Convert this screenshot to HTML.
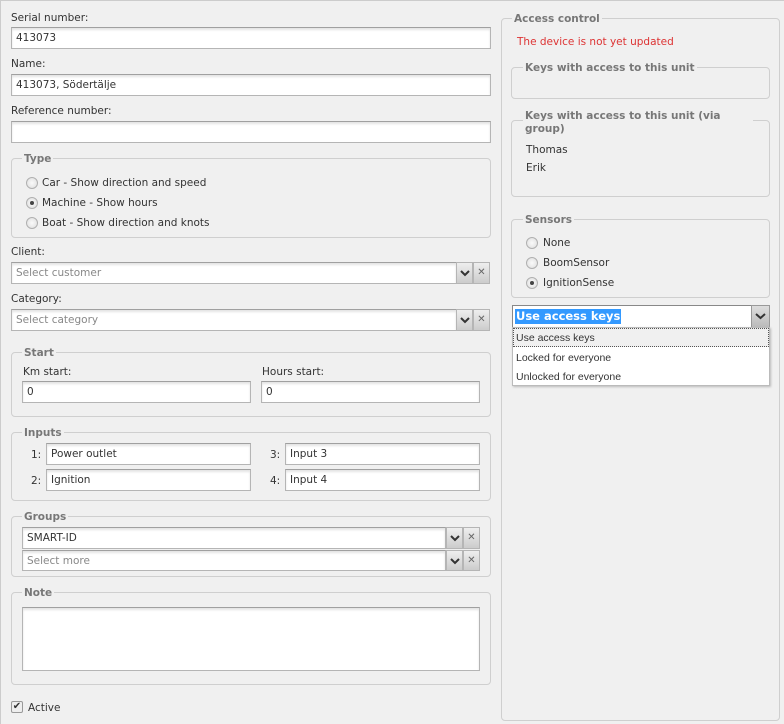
<!DOCTYPE html>
<html><head><meta charset="utf-8"><style>
*{box-sizing:border-box;margin:0;padding:0}
body{width:784px;height:724px;background:#f0f0f0;font-family:"DejaVu Sans",Verdana,sans-serif;font-size:10.5px;color:#333;position:relative;overflow:hidden}
.a{position:absolute}
.lbl{position:absolute;line-height:12px;padding-top:1px}
.inp{position:absolute;background:#fff;border:1px solid #b5b5b5;border-top-color:#a0a0a0;height:22px;line-height:21px;padding-left:4px;box-shadow:inset 0 2px 2px #e4e4e4}
.fs{position:absolute;border:1px solid #cfcfcf;border-radius:4px}
.lg{position:absolute;background:#f0f0f0;font-weight:bold;color:#777;padding:1px 2px 0;line-height:12px}
.rad{position:absolute;width:12px;height:12px;border-radius:50%;border:1px solid #b0b0b0;background:radial-gradient(#fafafa,#ddd);margin-top:1px}
.rad.on::after{content:"";position:absolute;left:3px;top:3px;width:4px;height:4px;border-radius:50%;background:#444}
.btn{position:absolute;width:17px;height:22px;border:1px solid #b5b5b5;background:linear-gradient(#eee,#ccc);color:#666;text-align:center;line-height:20px;font-size:10px}
.btn svg{position:absolute;left:3px;top:7px}
.ph{color:#888}
</style></head><body>
<div class="a" style="left:0;top:0;width:784px;height:1px;background:#ccc"></div>
<div class="a" style="left:0;top:0;width:1px;height:724px;background:#ccc"></div>

<div class="lbl" style="left:11px;top:11px">Serial number:</div>
<div class="inp" style="left:11px;top:27px;width:480px">413073</div>
<div class="lbl" style="left:11px;top:57px">Name:</div>
<div class="inp" style="left:11px;top:74px;width:480px">413073, Södertälje</div>
<div class="lbl" style="left:11px;top:104px">Reference number:</div>
<div class="inp" style="left:11px;top:121px;width:480px"></div>

<div class="fs" style="left:11px;top:158px;width:480px;height:80px"></div>
<div class="lg" style="left:22px;top:152px">Type</div>
<div class="rad" style="left:26px;top:176px"></div><div class="lbl" style="left:42px;top:176px">Car - Show direction and speed</div>
<div class="rad on" style="left:26px;top:196px"></div><div class="lbl" style="left:42px;top:196px">Machine - Show hours</div>
<div class="rad" style="left:26px;top:216px"></div><div class="lbl" style="left:42px;top:216px">Boat - Show direction and knots</div>

<div class="lbl" style="left:11px;top:245px">Client:</div>
<div class="inp ph" style="left:11px;top:262px;width:446px">Select customer</div>
<div class="btn" style="left:456px;top:262px"><svg width="10" height="7"><path d="M1 1L5 5L9 1" stroke="#333" stroke-width="2" fill="none"/></svg></div><div class="btn" style="left:473px;top:262px">✕</div>
<div class="lbl" style="left:11px;top:292px">Category:</div>
<div class="inp ph" style="left:11px;top:309px;width:446px">Select category</div>
<div class="btn" style="left:456px;top:309px"><svg width="10" height="7"><path d="M1 1L5 5L9 1" stroke="#333" stroke-width="2" fill="none"/></svg></div><div class="btn" style="left:473px;top:309px">✕</div>

<div class="fs" style="left:11px;top:352px;width:480px;height:65px"></div>
<div class="lg" style="left:22px;top:346px">Start</div>
<div class="lbl" style="left:23px;top:365px">Km start:</div>
<div class="inp" style="left:22px;top:381px;width:229px">0</div>
<div class="lbl" style="left:262px;top:365px">Hours start:</div>
<div class="inp" style="left:261px;top:381px;width:219px">0</div>

<div class="fs" style="left:11px;top:432px;width:480px;height:69px"></div>
<div class="lg" style="left:22px;top:426px">Inputs</div>
<div class="lbl" style="left:31px;top:448px">1:</div><div class="inp" style="left:46px;top:443px;width:205px">Power outlet</div>
<div class="lbl" style="left:31px;top:474px">2:</div><div class="inp" style="left:46px;top:469px;width:205px">Ignition</div>
<div class="lbl" style="left:270px;top:448px">3:</div><div class="inp" style="left:285px;top:443px;width:195px">Input 3</div>
<div class="lbl" style="left:270px;top:474px">4:</div><div class="inp" style="left:285px;top:469px;width:195px">Input 4</div>

<div class="fs" style="left:11px;top:516px;width:480px;height:61px"></div>
<div class="lg" style="left:22px;top:510px">Groups</div>
<div class="inp" style="left:22px;top:527px;width:424px">SMART-ID</div>
<div class="btn" style="left:446px;top:527px"><svg width="10" height="7"><path d="M1 1L5 5L9 1" stroke="#333" stroke-width="2" fill="none"/></svg></div><div class="btn" style="left:463px;top:527px">✕</div>
<div class="inp ph" style="left:22px;top:550px;width:424px;height:21px">Select more</div>
<div class="btn" style="left:446px;top:550px;height:21px"><svg width="10" height="7"><path d="M1 1L5 5L9 1" stroke="#333" stroke-width="2" fill="none"/></svg></div><div class="btn" style="left:463px;top:550px;height:21px">✕</div>

<div class="fs" style="left:11px;top:592px;width:480px;height:93px"></div>
<div class="lg" style="left:22px;top:586px">Note</div>
<div class="inp" style="left:22px;top:607px;width:458px;height:64px"></div>

<div class="a" style="left:11px;top:701px;width:12px;height:12px;border:1px solid #999;border-radius:2px;background:#eee;font-size:10px;line-height:10px;text-align:center">✔</div>
<div class="lbl" style="left:28px;top:701px">Active</div>

<div class="fs" style="left:501px;top:18px;width:279px;height:703px"></div>
<div class="lg" style="left:512px;top:12px">Access control</div>
<div class="lbl" style="left:517px;top:35px;color:#d33">The device is not yet updated</div>

<div class="fs" style="left:511px;top:67px;width:259px;height:32px"></div>
<div class="lg" style="left:523px;top:61px">Keys with access to this unit</div>

<div class="fs" style="left:511px;top:120px;width:259px;height:77px"></div>
<div class="lg" style="left:523px;top:109px;width:230px;line-height:13px">Keys with access to this unit (via group)</div>
<div class="lbl" style="left:526px;top:143px">Thomas</div>
<div class="lbl" style="left:526px;top:161px">Erik</div>

<div class="fs" style="left:511px;top:219px;width:259px;height:79px"></div>
<div class="lg" style="left:523px;top:213px">Sensors</div>
<div class="rad" style="left:526px;top:236px"></div><div class="lbl" style="left:543px;top:236px">None</div>
<div class="rad" style="left:526px;top:256px"></div><div class="lbl" style="left:543px;top:256px">BoomSensor</div>
<div class="rad on" style="left:526px;top:276px"></div><div class="lbl" style="left:543px;top:276px">IgnitionSense</div>

<div class="a" style="left:512px;top:305px;width:258px;height:23px;border:1px solid #888;background:#fff"></div>
<div class="a" style="left:515px;top:309px;background:#3399ff;color:#fff;line-height:15px;font-size:11.5px;font-weight:bold;padding:0 1px">Use access keys</div>
<div class="a" style="left:751px;top:305px;width:19px;height:23px;background:linear-gradient(#ddd,#bbb);border:1px solid #999"><svg width="17" height="21"><path d="M4 8L8.5 12L13 8" stroke="#333" stroke-width="2" fill="none"/></svg></div>
<div class="a" style="left:512px;top:327px;width:258px;height:59px;border:1px solid #bbb;background:#fff;box-shadow:1px 1px 2px #bbb"></div>
<div class="a" style="left:513px;top:328px;width:256px;height:19px;background:#f0f0f0;border:1px dotted #555;padding-left:2px;line-height:18px;font-family:'Liberation Sans',Arial,sans-serif;font-size:10.5px">Use access keys</div>
<div class="lbl" style="left:516px;top:351px;font-family:'Liberation Sans',Arial,sans-serif;font-size:10.5px">Locked for everyone</div>
<div class="lbl" style="left:516px;top:370px;font-family:'Liberation Sans',Arial,sans-serif;font-size:10.5px">Unlocked for everyone</div>
</body></html>
